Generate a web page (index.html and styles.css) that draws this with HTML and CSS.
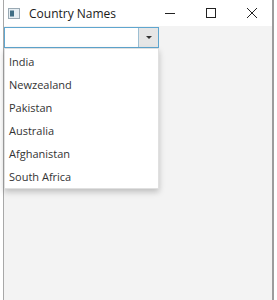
FILE: index.html
```html
<!DOCTYPE html>
<html lang="en">
<head>
<meta charset="UTF-8" />
<title>Country Names</title>
<link rel="stylesheet" href="styles.css">
</head>
<body>
<div class="window">
  <div class="titlebar">
    <svg class="app-icon" width="12" height="11" viewBox="0 0 12 11" aria-hidden="true">
      <rect x="0.5" y="0.5" width="11" height="10" fill="#e6eef3" stroke="#9aa9b3"/>
      <rect x="2" y="2.5" width="4" height="6" fill="#3f6d84"/>
    </svg>
    <span class="title">Country Names</span>
    <div class="controls">
      <svg class="ctl" width="41" height="26" viewBox="0 0 41 26" aria-hidden="true"><path d="M16 13.5h10" stroke="#222" stroke-width="1"/></svg>
      <svg class="ctl" width="41" height="26" viewBox="0 0 41 26" aria-hidden="true"><rect x="16.5" y="8.5" width="9" height="9" fill="none" stroke="#222"/></svg>
      <svg class="ctl" width="41" height="26" viewBox="0 0 41 26" aria-hidden="true"><path d="M16 8l10 10M26 8l-10 10" stroke="#222" stroke-width="1"/></svg>
    </div>
  </div>
  <div class="content">
    <div class="combo">
      <div class="combo-field"></div>
      <div class="combo-arrow"><span class="tri"></span></div>
    </div>
    <ul class="popup">
      <li>India</li>
      <li>Newzealand</li>
      <li>Pakistan</li>
      <li>Australia</li>
      <li>Afghanistan</li>
      <li>South Africa</li>
    </ul>
  </div>
</div>
</body>
</html>
```

FILE: styles.css
```css
body {
  margin: 0;
  width: 277px;
  height: 300px;
  overflow: hidden;
  background: #fff;
  font-family: 'Open Sans', 'Noto Sans', sans-serif;
}

.window {
  margin-left: 3px;
  width: 271px;
  height: 300px;
  border-left: 1px solid #a8a8a8;
  border-right: 2px solid #9c9c9c;
  box-sizing: border-box;
  display: flex;
  flex-direction: column;
}

.titlebar {
  height: 26px;
  background: #fff;
  display: flex;
  align-items: center;
}
.app-icon {
  margin-left: 4px;
  margin-right: 9px;
}
.title {
  font-size: 12px;
  color: #1a1a1a;
  flex: 1;
}
.controls {
  display: flex;
}
.ctl {
  display: block;
}

.content {
  flex: 1;
  background: #f3f3f3;
  position: relative;
  padding-top: 1px;
}

.combo {
  display: flex;
  width: 155px;
  height: 21px;
  border: 1px solid #5fa6cf;
  box-sizing: border-box;
  background: #fff;
}
.combo-field {
  flex: 1;
}
.combo-arrow {
  width: 19px;
  background: #e6e6e6;
  border-left: 1px solid #9dbfd3;
  display: flex;
  align-items: center;
  justify-content: center;
}
.tri {
  width: 0;
  height: 0;
  border-left: 3px solid transparent;
  border-right: 3px solid transparent;
  border-top: 3px solid #333;
}

.popup {
  position: absolute;
  left: 0;
  top: 22px;
  width: 155px;
  margin: 0;
  padding: 1px 0 0;
  list-style: none;
  background: #fff;
  box-sizing: border-box;
  border: 1px solid #e0e0e0;
  box-shadow: 0 3px 6px rgba(0,0,0,0.22);
}
.popup li {
  height: 23px;
  line-height: 23px;
  padding-left: 4px;
  font-size: 11px;
  color: #333;
}
```
